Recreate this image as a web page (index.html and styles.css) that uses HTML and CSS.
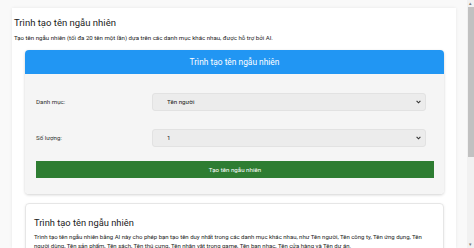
FILE: index.html
```html
<!DOCTYPE html>
<html lang="vi">
<head>
	<meta charset="UTF-8">
	<meta name="viewport" content="width=device-width, initial-scale=1.0">
	<title>Trình tạo tên ngẫu nhiên</title>
	<link rel="stylesheet" href="styles.css">
</head>
<body>
	<div class="page">
		<main class="main-card">
			<h1 class="page-title">Trình tạo tên ngẫu nhiên</h1>
			<p class="page-desc">Tạo tên ngẫu nhiên (tối đa 20 tên một lần) dựa trên các danh mục khác nhau, được hỗ trợ bởi AI.</p>

			<section class="generator">
				<div class="generator-head">Trình tạo tên ngẫu nhiên</div>
				<form class="generator-body">
					<div class="form-row">
						<label for="category">Danh mục:</label>
						<select id="category">
							<option>Tên người</option>
							<option>Tên công ty</option>
							<option>Tên ứng dụng</option>
						</select>
					</div>
					<div class="form-row">
						<label for="count">Số lượng:</label>
						<select id="count">
							<option>1</option>
							<option>5</option>
							<option>10</option>
							<option>20</option>
						</select>
					</div>
					<button type="button" class="generate-btn">Tạo tên ngẫu nhiên</button>
				</form>
			</section>

			<section class="about">
				<h2 class="about-title">Trình tạo tên ngẫu nhiên</h2>
				<p class="about-text">Trình tạo tên ngẫu nhiên bằng AI này cho phép bạn tạo tên duy nhất trong các danh mục khác nhau, như Tên người, Tên công ty, Tên ứng dụng, Tên người dùng, Tên sản phẩm, Tên sách, Tên thú cưng, Tên nhân vật trong game, Tên ban nhạc, Tên cửa hàng và Tên dự án.</p>
			</section>
		</main>
	</div>

	<div class="scrollbar">
		<span class="scroll-arrow">&#9652;</span>
		<div class="scroll-thumb"></div>
		<span class="scroll-gap"></span>
		<span class="scroll-arrow">&#9662;</span>
	</div>
</body>
</html>
```

FILE: styles.css
```css
html,
body {
	height: 100%;
}

body {
	margin: 0;
	font-family: Roboto, "Liberation Sans", Arial, sans-serif;
	background: #f9f9f9;
	color: #222;
	display: flex;
	overflow: hidden;
}

.page {
	flex: 1;
	padding: 8px 6px 0 12px;
}

.main-card {
	width: 444px;
	height: 100%;
	background: #fff;
	box-shadow: 0 0 3px rgba(0, 0, 0, 0.08);
	padding: 0 12px 0 2px;
	box-sizing: border-box;
}

.page-title {
	margin: 0;
	padding-top: 8px;
	font-size: 9.5px;
	font-weight: 400;
	line-height: 14px;
}

.page-desc {
	margin: 4px 0 0;
	font-size: 6.1px;
	line-height: 8px;
}

.generator {
	margin: 8px 0 0 11px;
	border-radius: 4px;
	box-shadow: 0 1px 3px rgba(0, 0, 0, 0.18);
	overflow: hidden;
}

.generator-head {
	background: #2196f3;
	color: #fff;
	text-align: center;
	font-size: 8.4px;
	height: 24px;
	line-height: 24px;
}

.generator-body {
	background: #f5f5f5;
	padding: 19px 10px 16px 11px;
	display: flex;
	flex-direction: column;
}

.form-row {
	display: grid;
	grid-template-columns: 116px 274px;
	align-items: center;
	margin-bottom: 18px;
}

.form-row:nth-child(2) {
	margin-bottom: 14px;
}

.form-row label {
	font-size: 6.2px;
	color: #333;
}

.form-row select {
	-webkit-appearance: none;
	appearance: none;
	height: 18px;
	padding: 0 0 0 14px;
	font-family: inherit;
	font-size: 6.2px;
	color: #222;
	background: #ececec url("data:image/svg+xml,%3Csvg xmlns='http://www.w3.org/2000/svg' width='5' height='4' viewBox='0 0 5 4'%3E%3Cpath d='M0.6 0.8 L2.5 2.8 L4.4 0.8' fill='none' stroke='%23333' stroke-width='1.1'/%3E%3C/svg%3E") no-repeat right 4px center;
	border: 1px solid #e2e2e2;
	border-radius: 3px;
	outline: none;
}

.generate-btn {
	height: 17px;
	border: 0;
	padding: 0;
	background: #2e7d32;
	color: #fff;
	font-family: inherit;
	font-size: 6.2px;
	cursor: pointer;
}

.about {
	margin: 9px 0 0 11px;
	padding: 0 8px;
	border: 1px solid #e6e6e6;
	border-radius: 4px;
	box-shadow: 0 1px 3px rgba(0, 0, 0, 0.08);
	height: 60px;
}

.about-title {
	margin: 0;
	padding-top: 12px;
	font-size: 9.3px;
	font-weight: 400;
	line-height: 14px;
}

.about-text {
	margin: 2px 0 0;
	font-size: 6px;
	line-height: 9px;
}

.scrollbar {
	width: 7px;
	background: #f1f1f1;
	display: flex;
	flex-direction: column;
	align-items: center;
}

.scroll-arrow {
	font-size: 5px;
	line-height: 7px;
	color: #777;
}

.scroll-thumb {
	width: 6px;
	height: 150px;
	background: #c1c1c1;
}

.scroll-gap {
	flex: 1;
}
```
